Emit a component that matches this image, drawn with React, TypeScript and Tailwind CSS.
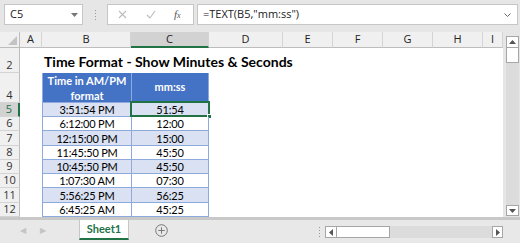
import React from "react";

const rows = [
  ["3:51:54 PM", "51:54"],
  ["6:12:00 PM", "12:00"],
  ["12:15:00 PM", "15:00"],
  ["11:45:50 PM", "45:50"],
  ["10:45:50 PM", "45:50"],
  ["1:07:30 AM", "07:30"],
  ["5:56:25 PM", "56:25"],
  ["6:45:25 AM", "45:25"],
];
const rowHeights = ["h-[14px]", "h-[14px]", "h-[15px]", "h-[14px]", "h-[14px]", "h-[14px]", "h-[15px]", "h-[14px]"];
const cols = ["A", "B", "C", "D", "E", "F", "G", "H", "I"];
const colW = ["w-[22px]", "w-[89px]", "w-[78px]", "w-[74px]", "w-[50px]", "w-[50px]", "w-[50px]", "w-[50px]", "w-[20px]"];

function RowHead({ n, sel }: { n: string; sel?: boolean }) {
  return (
    <div
      className={
        "w-[20px] shrink-0 flex items-end justify-center text-[11px] leading-[14px] border-b border-[#d4d4d4] " +
        (sel
          ? "bg-[#d2d2d2] text-[#217346] border-r-2 border-r-[#217346]"
          : "bg-[#f0f0f0] text-[#333] border-r border-r-[#bdbdbd]")
      }
    >
      {n}
    </div>
  );
}

export default function App() {
  return (
    <div className="w-[520px] h-[243px] bg-[#e6e6e6] flex flex-col overflow-hidden font-['Open_Sans',sans-serif] text-[#222]">
      {/* formula bar */}
      <div className="h-[32px] shrink-0 flex items-start pt-[4px] pl-[4px]">
        <div className="w-[79px] h-[21px] bg-white border border-[#c6c6c6] flex items-center justify-between pl-[5px] pr-[4px] text-[11px]">
          <span>C5</span>
          <svg width="7" height="4" viewBox="0 0 7 4"><path d="M0 0h7L3.5 4z" fill="#777" /></svg>
        </div>
        <div className="w-[24px] h-[21px] flex items-center justify-center">
          <div className="flex flex-col gap-[2px]">
            <span className="w-[1px] h-[1px] bg-[#999]" />
            <span className="w-[1px] h-[1px] bg-[#999]" />
            <span className="w-[1px] h-[1px] bg-[#999]" />
            <span className="w-[1px] h-[1px] bg-[#999]" />
          </div>
        </div>
        <div className="w-[87px] h-[21px] bg-white border border-[#c6c6c6] flex items-center">
          <svg className="ml-[10px]" width="9" height="9" viewBox="0 0 9 9"><path d="M1 1l7 7M8 1l-7 7" stroke="#bbb" strokeWidth="1.1" /></svg>
          <svg className="ml-[19px]" width="10" height="9" viewBox="0 0 10 9"><path d="M1 5l3 3 5-7" stroke="#bbb" strokeWidth="1.1" fill="none" /></svg>
          <span className="ml-[18px] text-[11px] italic text-[#555] font-['Liberation_Serif',serif]">f<span className="text-[8px]">x</span></span>
        </div>
        <div className="ml-[3px] w-[321px] h-[21px] bg-white border border-[#c6c6c6] flex items-center justify-between pl-[5px] pr-[6px] text-[11px]">
          <span>=TEXT(B5,"mm:ss")</span>
          <svg width="7" height="4" viewBox="0 0 7 4"><path d="M0.5 0.5l3 3 3-3" stroke="#666" fill="none" /></svg>
        </div>
      </div>

      {/* main */}
      <div className="h-[185px] shrink-0 flex">
        <div className="w-[503px] bg-white flex flex-col overflow-hidden">
          {/* column headers */}
          <div className="h-[16px] shrink-0 flex">
            <div className="w-[20px] shrink-0 bg-[#f0f0f0] border-r border-b border-[#bdbdbd] flex items-end justify-end p-[2px]">
              <svg width="9" height="9" viewBox="0 0 9 9"><path d="M9 0v9H0z" fill="#c3c3c3" /></svg>
            </div>
            {cols.map((c, i) => (
              <div
                key={c}
                className={
                  colW[i] +
                  " shrink-0 flex items-center justify-center text-[11px] border-r border-[#d4d4d4] " +
                  (c === "C"
                    ? "bg-[#d2d2d2] text-[#222] border-b-2 border-b-[#217346]"
                    : "bg-[#f0f0f0] border-b border-b-[#bdbdbd]")
                }
              >
                {c}
              </div>
            ))}
          </div>
          {/* row 2 */}
          <div className="h-[25px] shrink-0 flex">
            <RowHead n="2" />
            <div className="w-[22px] shrink-0" />
            <div className="flex-1 flex items-center pl-[2px] pt-[1px] text-[14px] font-bold font-['Lato',sans-serif] whitespace-nowrap text-black">
              Time Format - Show Minutes &amp; Seconds
            </div>
          </div>
          {/* row 4 header */}
          <div className="h-[30px] shrink-0 flex">
            <RowHead n="4" />
            <div className="w-[22px] shrink-0" />
            <div className="w-[89px] shrink-0 bg-[#4472c4] text-white font-bold text-[11px] leading-[15px] flex items-center justify-center text-center font-['Lato',sans-serif] border-l border-b border-[#8ea9db]">
              Time in AM/PM
              <br />
              format
            </div>
            <div className="w-[78px] shrink-0 bg-[#4472c4] text-white font-bold text-[11px] flex items-center justify-center font-['Lato',sans-serif] border-l border-r border-b border-[#8ea9db]">
              mm:ss
            </div>
          </div>
          {rows.map((r, i) => {
            const band = i % 2 === 0 ? "bg-[#d9e1f2]" : "bg-white";
            const sel = i === 0;
            return (
              <div key={i} className={rowHeights[i] + " shrink-0 flex"}>
                <RowHead n={String(i + 5)} sel={sel} />
                <div className="w-[22px] shrink-0" />
                <div className={"w-[89px] shrink-0 border-l border-b border-[#8ea9db] flex items-center justify-center text-[11px] leading-none font-['Lato',sans-serif] tracking-[-0.2px] text-black " + band}>
                  {r[0]}
                </div>
                <div className={"relative w-[78px] shrink-0 border-l border-r border-b border-[#8ea9db] flex items-center justify-center text-[11px] leading-none font-['Lato',sans-serif] tracking-[-0.2px] text-black " + band}>
                  {r[1]}
                  {sel && (
                    <div className="absolute left-[-2px] top-[-2px] right-[-2px] bottom-[-1px] border-2 border-[#217346]">
                      <div className="absolute right-[-4px] bottom-[-4px] w-[5px] h-[5px] bg-[#217346] border border-white" />
                    </div>
                  )}
                </div>
              </div>
            );
          })}
        </div>
        {/* vertical scrollbar */}
        <div className="w-[17px] flex flex-col items-center pt-[4px] pb-[1px] pl-[1px]">
          <div className="w-[13px] h-[12px] bg-white border border-[#a6a6a6] flex items-center justify-center">
            <svg width="7" height="4" viewBox="0 0 7 4"><path d="M0 4h7L3.5 0z" fill="#555" /></svg>
          </div>
          <div className="w-[13px] h-[15px] bg-white border border-[#a6a6a6] border-t-0" />
          <div className="flex-1 w-[13px] bg-[#dcdcdc]" />
          <div className="w-[13px] h-[11px] bg-white border border-[#a6a6a6] flex items-center justify-center">
            <svg width="7" height="4" viewBox="0 0 7 4"><path d="M0 0h7L3.5 4z" fill="#555" /></svg>
          </div>
        </div>
      </div>

      {/* tab bar */}
      <div className="flex-1 flex items-start border-t-[3px] border-[#c8c8c8] bg-[#e8e8e8]">
        <div className="w-[79px] h-[20px] flex items-center text-[8px] text-[#c4c4c4]">
          <span className="ml-[20px]">◀</span>
          <span className="ml-[14px]">▶</span>
        </div>
        <div className="w-[50px] h-[20px] bg-white border-x border-[#c6c6c6] border-b-2 border-b-[#217346] flex items-center justify-center text-[11px] font-bold text-[#217346] font-['Lato',sans-serif]">
          Sheet1
        </div>
        <div className="w-[64px] h-[20px] flex items-center justify-center">
          <svg width="13" height="13" viewBox="0 0 13 13">
            <circle cx="6.5" cy="6.5" r="5.8" fill="none" stroke="#777" strokeWidth="1" />
            <path d="M6.5 3.3v6.4M3.3 6.5h6.4" stroke="#777" strokeWidth="1" />
          </svg>
        </div>
        <div className="flex-1" />
        <div className="w-[12px] h-[20px] flex flex-col items-center justify-center gap-[2px] pt-[4px]">
          <span className="w-[1px] h-[1px] bg-[#999]" />
          <span className="w-[1px] h-[1px] bg-[#999]" />
          <span className="w-[1px] h-[1px] bg-[#999]" />
          <span className="w-[1px] h-[1px] bg-[#999]" />
        </div>
        <div className="w-[178px] h-[12px] mt-[6px] flex bg-[#dcdcdc]">
          <div className="w-[12px] h-full bg-white border border-[#a6a6a6] flex items-center justify-center">
            <svg width="4" height="7" viewBox="0 0 4 7"><path d="M4 0v7L0 3.5z" fill="#555" /></svg>
          </div>
          <div className="w-[53px] h-full bg-white border border-l-0 border-[#a6a6a6]" />
          <div className="flex-1" />
          <div className="w-[11px] h-full bg-white border border-[#a6a6a6] flex items-center justify-center">
            <svg width="4" height="7" viewBox="0 0 4 7"><path d="M0 0v7L4 3.5z" fill="#555" /></svg>
          </div>
        </div>
        <div className="w-[17px]" />
      </div>
    </div>
  );
}
